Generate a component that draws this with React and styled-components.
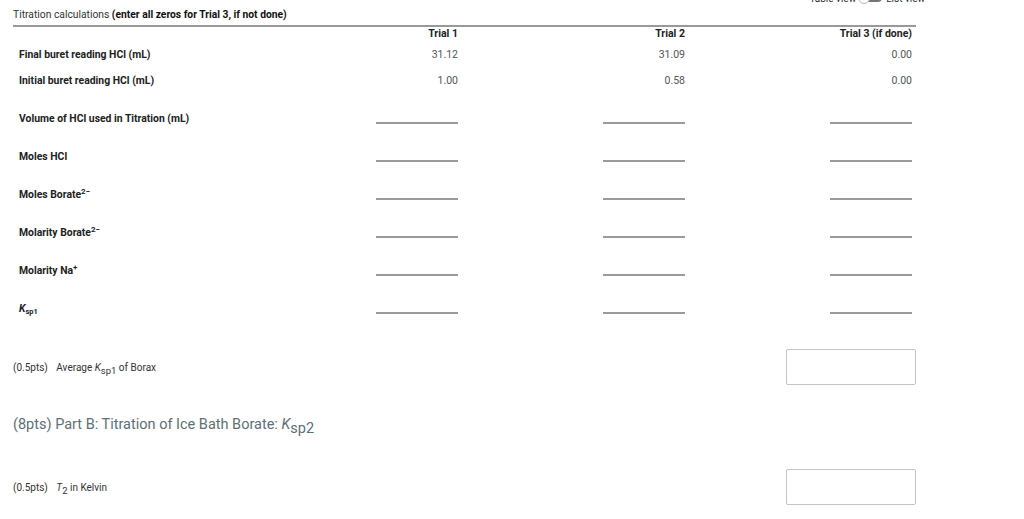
import React from "react";
import styled, { createGlobalStyle } from "styled-components";

const GlobalStyle = createGlobalStyle`
  html, body {
    margin: 0;
    padding: 0;
    background: #ffffff;
    overflow: hidden;
  }
  body {
    font-family: Roboto, "Liberation Sans", sans-serif;
    color: #333333;
  }
`;

const Page = styled.div`
  width: 1024px;
  height: 519px;
  overflow: hidden;
  padding-left: 13px;
  box-sizing: border-box;
`;

const ViewBar = styled.div`
  width: 912px;
  height: 10px;
  margin-top: -7px;
  display: flex;
  justify-content: flex-end;
  align-items: center;
  gap: 4px;
  font-size: 10px;
  color: #333;
`;

const Switch = styled.span`
  position: relative;
  display: inline-block;
  width: 22px;
  height: 8px;
  border-radius: 4px;
  background: #777;

  &::before {
    content: "";
    position: absolute;
    left: -2px;
    top: -2px;
    width: 12px;
    height: 12px;
    border-radius: 50%;
    background: #fff;
    border: 1px solid #bbb;
    box-sizing: border-box;
  }
`;

const Title = styled.div`
  width: 903px;
  margin-top: 6px;
  padding-bottom: 4px;
  border-bottom: 2px solid #999999;
  font-size: 10.3px;
  line-height: 12px;
  color: #333;

  b {
    font-weight: 700;
    color: #111;
  }
`;

const Row = styled.div`
  width: 903px;
  height: ${(p) => p.h}px;
  margin-top: ${(p) => p.mt || 0}px;
  display: grid;
  grid-template-columns: 218px 227px 227px 227px;
  align-items: center;
`;

const Label = styled.div`
  padding-left: 6px;
  font-size: 10.4px;
  font-weight: 700;
  color: #222;
  white-space: nowrap;

  sup {
    font-size: 8px;
    vertical-align: 4px;
    line-height: 0;
  }
  sub {
    font-size: 7.5px;
    vertical-align: -2px;
    line-height: 0;
  }
`;

const Head = styled.div`
  text-align: right;
  font-size: 10.5px;
  font-weight: 700;
  color: #222;
  line-height: 12px;
`;

const Value = styled.div`
  text-align: right;
  font-size: 10.5px;
  color: #555;
`;

const Cell = styled.div`
  display: flex;
  justify-content: flex-end;
`;

const BlankInput = styled.div`
  width: 82px;
  height: 10px;
  border-bottom: 2px solid #9a9a9a;
`;

const QuestionRow = styled.div`
  width: 903px;
  margin-top: ${(p) => p.mt}px;
  display: flex;
  justify-content: space-between;
  align-items: center;
`;

const Question = styled.div`
  font-size: 10px;
  color: #333;
  white-space: nowrap;

  span.pts {
    margin-right: 6px;
  }
  i {
    font-style: italic;
  }
  sub {
    font-size: 9.5px;
    vertical-align: -3px;
    line-height: 0;
  }
`;

const AnswerBox = styled.div`
  width: 130px;
  height: 36px;
  border: 1px solid #c4c4c4;
  border-radius: 2px;
  box-sizing: border-box;
`;

const PartHeading = styled.div`
  margin-top: 31px;
  font-size: 14.5px;
  line-height: 18px;
  color: #5d7075;

  sub {
    font-size: 14.5px;
    vertical-align: -4px;
    line-height: 0;
  }
`;

const rows = [
  { label: "Volume of HCl used in Titration (mL)" },
  { label: "Moles HCl" },
  { label: <>Moles Borate<sup>2−</sup></> },
  { label: <>Molarity Borate<sup>2−</sup></> },
  { label: <>Molarity Na<sup>+</sup></> },
  { label: <><i>K</i><sub>sp1</sub></> },
];

const App = () => {
  return (
    <Page>
      <GlobalStyle />
      <ViewBar>
        Table view <Switch /> List view
      </ViewBar>

      <Title>
        Titration calculations <b>(enter all zeros for Trial 3, if not done)</b>
      </Title>

      <Row h={12} mt={1}>
        <div />
        <Head>Trial 1</Head>
        <Head>Trial 2</Head>
        <Head>Trial 3 (if done)</Head>
      </Row>

      <Row h={26} mt={1}>
        <Label>Final buret reading HCl (mL)</Label>
        <Value>31.12</Value>
        <Value>31.09</Value>
        <Value>0.00</Value>
      </Row>

      <Row h={26}>
        <Label>Initial buret reading HCl (mL)</Label>
        <Value>1.00</Value>
        <Value>0.58</Value>
        <Value>0.00</Value>
      </Row>

      {rows.map((r, i) => (
        <Row key={i} h={38} mt={i === 0 ? 6 : 0}>
          <Label>{r.label}</Label>
          <Cell><BlankInput /></Cell>
          <Cell><BlankInput /></Cell>
          <Cell><BlankInput /></Cell>
        </Row>
      ))}

      <QuestionRow mt={22}>
        <Question>
          <span className="pts">(0.5pts)</span> Average <i>K</i><sub>sp1</sub> of Borax
        </Question>
        <AnswerBox />
      </QuestionRow>

      <PartHeading>
        (8pts) Part B: Titration of Ice Bath Borate: <i>K</i><sub>sp2</sub>
      </PartHeading>

      <QuestionRow mt={35}>
        <Question>
          <span className="pts">(0.5pts)</span> <i>T</i><sub>2</sub> in Kelvin
        </Question>
        <AnswerBox />
      </QuestionRow>
    </Page>
  );
};

export default App;
